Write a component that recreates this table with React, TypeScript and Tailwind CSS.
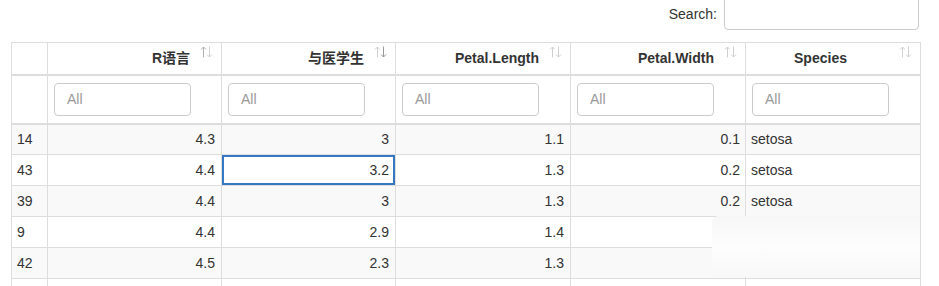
import type { ReactNode } from 'react'

const FONT = '[font-family:"Liberation_Sans","Noto_Sans_CJK_SC",Arial,sans-serif]'

type Row = { id: number; a: string; b: string; c: string; d: string; s: string }

const ROWS: Row[] = [
  { id: 14, a: '4.3', b: '3', c: '1.1', d: '0.1', s: 'setosa' },
  { id: 43, a: '4.4', b: '3.2', c: '1.3', d: '0.2', s: 'setosa' },
  { id: 39, a: '4.4', b: '3', c: '1.3', d: '0.2', s: 'setosa' },
  { id: 9, a: '4.4', b: '2.9', c: '1.4', d: '0.2', s: 'setosa' },
  { id: 42, a: '4.5', b: '2.3', c: '1.3', d: '0.3', s: 'setosa' },
]

function SortIcon({ dark }: { dark?: 'up' | 'down' }) {
  const up = dark === 'up' ? '#b0b0b0' : '#d0d0d0'
  const down = dark === 'down' ? '#999' : '#d0d0d0'
  return (
    <svg className="absolute right-[8px] top-[3px]" width="13" height="12" viewBox="0 0 13 12" fill="none">
      <g stroke={up} strokeWidth="1">
        <path d="M3.5 11.5V1" />
        <path d="M1 3.5L3.5 1L6 3.5" />
      </g>
      <g stroke={down} strokeWidth="1">
        <path d="M9.5 0.5V11" />
        <path d="M7 8.5L9.5 11L12 8.5" />
      </g>
    </svg>
  )
}

function Th({ children, align = 'right', dark }: { children?: ReactNode; align?: 'right' | 'center'; dark?: 'up' | 'down' }) {
  return (
    <th
      className={`relative h-[32px] border border-b-[2px] border-[#ddd] pl-[6px] pr-[31px] font-bold text-[14px] text-[#333] ${
        align === 'right' ? 'text-right' : 'text-center'
      }`}
    >
      {children}
      <SortIcon dark={dark} />
    </th>
  )
}

function FilterCell() {
  return (
    <td className="h-[49px] border border-b-[2px] border-[#ddd] px-[6px]">
      <div className="w-[137px] h-[33px] rounded-[4px] border border-[#ccc] bg-white flex items-center pl-[12px] text-[14px] text-[#999]">
        All
      </div>
    </td>
  )
}

export default function App() {
  return (
    <div className={`relative w-[939px] h-[286px] overflow-hidden bg-white ${FONT}`}>
      <div className="flex items-center justify-end gap-[7px] pr-[20px] h-[34px] mt-[-4px]">
        <span className="text-[14px] text-[#333] pt-[2px]">Search:</span>
        <div className="w-[195px] h-[34px] rounded-[4px] border border-[#ccc] bg-white" />
      </div>

      <table className="ml-[11px] mt-[12px] w-[909px] table-fixed border-collapse text-[14px] text-[#333]">
        <colgroup>
          <col className="w-[36px]" />
          <col className="w-[174px]" />
          <col className="w-[174px]" />
          <col className="w-[175px]" />
          <col className="w-[175px]" />
          <col className="w-[175px]" />
        </colgroup>
        <thead>
          <tr>
            <th className="h-[32px] border border-b-[2px] border-[#ddd]" />
            <Th dark="up">R语言</Th>
            <Th dark="down">与医学生</Th>
            <Th>Petal.Length</Th>
            <Th>Petal.Width</Th>
            <Th align="center">Species</Th>
          </tr>
          <tr>
            <td className="h-[49px] border border-b-[2px] border-[#ddd]" />
            <FilterCell />
            <FilterCell />
            <FilterCell />
            <FilterCell />
            <FilterCell />
          </tr>
        </thead>
        <tbody>
          {ROWS.map((r, i) => (
            <tr key={r.id} className={i % 2 === 0 ? 'bg-[#f9f9f9]' : 'bg-white'}>
              <td className="h-[31px] border border-[#ddd] pl-[5px]">{r.id}</td>
              <td className="border border-[#ddd] text-right pr-[6px]">{r.a}</td>
              <td
                className={`border border-[#ddd] text-right pr-[6px] ${
                  r.id === 43 ? 'bg-white shadow-[inset_0_0_0_2px_#3677c2]' : ''
                }`}
              >
                {r.b}
              </td>
              <td className="border border-[#ddd] text-right pr-[6px]">{r.c}</td>
              <td className="border border-[#ddd] text-right pr-[5px]">{r.d}</td>
              <td className="border border-[#ddd] pl-[5px]">{r.s}</td>
            </tr>
          ))}
          <tr className="bg-white">
            <td className="h-[31px] border border-[#ddd]" />
            <td className="border border-[#ddd]" />
            <td className="border border-[#ddd]" />
            <td className="border border-[#ddd]" />
            <td className="border border-[#ddd]" />
            <td className="border border-[#ddd]" />
          </tr>
        </tbody>
      </table>

      {/* erased patch over the lower right cells */}
      <div className="absolute left-[712px] top-[216px] w-[208px] h-[61px] rounded-tl-[6px] bg-gradient-to-b from-[#f7f7f7] via-[#fdfdfd] to-[#f8f8f8]" />
    </div>
  )
}
